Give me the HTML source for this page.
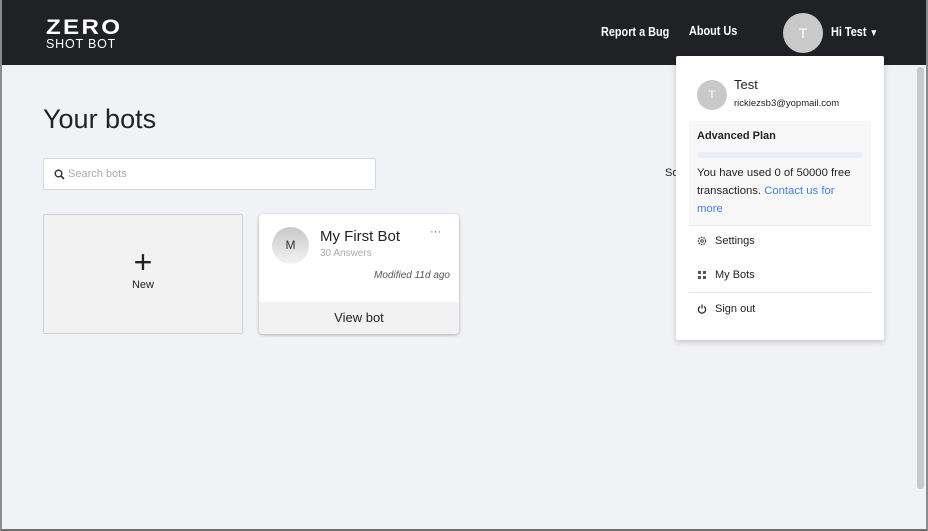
<!DOCTYPE html>
<html><head><meta charset="utf-8"><style>
*{box-sizing:border-box;margin:0;padding:0}
body{width:928px;height:531px;overflow:hidden;background:#f1f2f6;font-family:"Liberation Sans",sans-serif;position:relative;color:#222}
.frame{position:absolute;inset:0;border-left:2px solid #8a8a8a;border-bottom:2px solid #6e6e6e;border-right:2px solid #8a8a8a;pointer-events:none;z-index:10}
.top{position:absolute;left:0;top:0;width:928px;height:65px;background:#202125}
.logo{position:absolute;left:46px;top:18px;color:#fff}
.logo .z{font-weight:900;font-size:21px;letter-spacing:2px;line-height:20px;transform:scaleX(1.15);transform-origin:left}
.logo .s{font-size:12.5px;letter-spacing:0.8px;line-height:12px}
.nav{position:absolute;top:25px;color:#fff;font-size:12.5px;font-weight:bold;transform:scaleX(0.87);transform-origin:left}
.av{position:absolute;border-radius:50%;background:#c9c9c9;color:#fff;text-align:center}
h1{position:absolute;left:43px;top:104px;font-weight:normal;font-size:27px;color:#222}
.search{position:absolute;left:43px;top:158px;width:333px;height:32px;background:#fff;border:1px solid #d8d8dc;border-radius:2px;font-size:11px;color:#aaa;padding:9px 0 0 24px}
.new{position:absolute;left:43px;top:214px;width:200px;height:120px;background:#f2f2f2;border:1px solid #cfcfd3;border-radius:2px;text-align:center;font-size:11px}
.card{position:absolute;left:259px;top:214px;width:200px;height:120px;background:#fff;border-radius:4px;box-shadow:0 1px 3px rgba(0,0,0,.3);overflow:hidden}
.menu{position:absolute;left:676px;top:56px;width:208px;height:284px;background:#fff;border-radius:2px;box-shadow:0 2px 6px rgba(0,0,0,.2);font-size:11px}
.sb{position:absolute;left:917px;top:67px;width:7px;height:422px;background:#c8c8c8;border-radius:3px}
.mi{position:absolute;left:21px;font-size:11px;display:flex;align-items:center;gap:8px}
</style></head><body>
<div class="top">
 <div class="logo"><div class="z">ZERO</div><div class="s">SHOT BOT</div></div>
 <div class="nav" style="left:601px">Report a Bug</div>
 <div class="nav" style="left:689px;top:24px">About Us</div>
 <div class="av" style="left:783px;top:13px;width:40px;height:40px;line-height:40px;font-size:14px">T</div>
 <div class="nav" style="left:831px">Hi Test <span style="font-size:10px">▼</span></div>
</div>
<h1>Your bots</h1>
<div class="search"><svg style="position:absolute;left:10px;top:10px" width="11" height="11" viewBox="0 0 11 11"><circle cx="4.5" cy="4.5" r="3.3" fill="none" stroke="#333" stroke-width="1.4"/><path d="M7 7l3 3" stroke="#333" stroke-width="1.6"/></svg>Search bots</div>
<div style="position:absolute;left:665px;top:167px;font-size:11px">So</div>
<div class="new"><div style="font-size:32px;font-weight:300;margin-top:30px;line-height:34px">+</div>New</div>
<div class="card">
 <div class="av" style="left:13px;top:13px;width:37px;height:37px;line-height:37px;font-size:12px;color:#333;background:linear-gradient(#c8c8c8,#f3f3f3)">M</div>
 <div style="position:absolute;left:61px;top:14px;font-size:15px;color:#222">My First Bot</div>
 <div style="position:absolute;left:61px;top:34px;font-size:10px;color:#aaa">30 Answers</div>
 <div style="position:absolute;left:171px;top:12px;font-size:11px;color:#555">···</div>
 <div style="position:absolute;right:9px;top:56px;font-size:10px;color:#555;font-style:italic">Modified 11d ago</div>
 <div style="position:absolute;left:0;top:88px;width:200px;height:32px;background:#f2f2f2;text-align:center;line-height:31px;font-size:13px">View bot</div>
</div>
<div class="sb"></div>
<div class="menu">
 <div class="av" style="left:21px;top:24px;width:30px;height:30px;line-height:30px;font-size:11px">T</div>
 <div style="position:absolute;left:58px;top:21px;font-size:13px">Test</div>
 <div style="position:absolute;left:58px;top:42px;font-size:9.5px">rickiezsb3@yopmail.com</div>
 <div style="position:absolute;left:13px;top:65px;width:182px;height:104px;background:#f8f8f8;padding:9px 8px;line-height:18px;font-size:11.3px">
  <div style="font-weight:bold;font-size:11px;line-height:12px">Advanced Plan</div>
  <div style="height:6px;background:#e8eef9;border-radius:3px;margin:10px 0 6px"></div>
  <div style="width:156px">You have used 0 of 50000 free transactions. <span style="color:#3b82f6">Contact us for more</span></div>
 </div>
 <div style="position:absolute;left:13px;top:169px;width:182px;border-top:1px solid #e8e8e8"></div>
 <div class="mi" style="top:179px"><svg width="10" height="10" viewBox="0 0 10 10"><circle cx="5" cy="5" r="3.6" fill="none" stroke="#444" stroke-width="1.3" stroke-dasharray="1.6 1"/><circle cx="5" cy="5" r="1.3" fill="none" stroke="#444"/></svg>Settings</div>
 <div class="mi" style="top:213px"><svg width="10" height="10" viewBox="0 0 10 10" fill="#555"><rect x="1" y="1" width="3" height="3"/><rect x="6" y="1" width="3" height="3"/><rect x="1" y="6" width="3" height="3"/><rect x="6" y="6" width="3" height="3"/></svg>My Bots</div>
 <div style="position:absolute;left:13px;top:236px;width:182px;border-top:1px solid #e8e8e8"></div>
 <div class="mi" style="top:247px"><svg width="10" height="10" viewBox="0 0 10 10"><path d="M3 2.5A3.6 3.6 0 1 0 7 2.5" fill="none" stroke="#222" stroke-width="1.2"/><path d="M5 0.5v4" stroke="#222" stroke-width="1.2"/></svg>Sign out</div>
</div>
<div class="frame"></div>
</body></html>
